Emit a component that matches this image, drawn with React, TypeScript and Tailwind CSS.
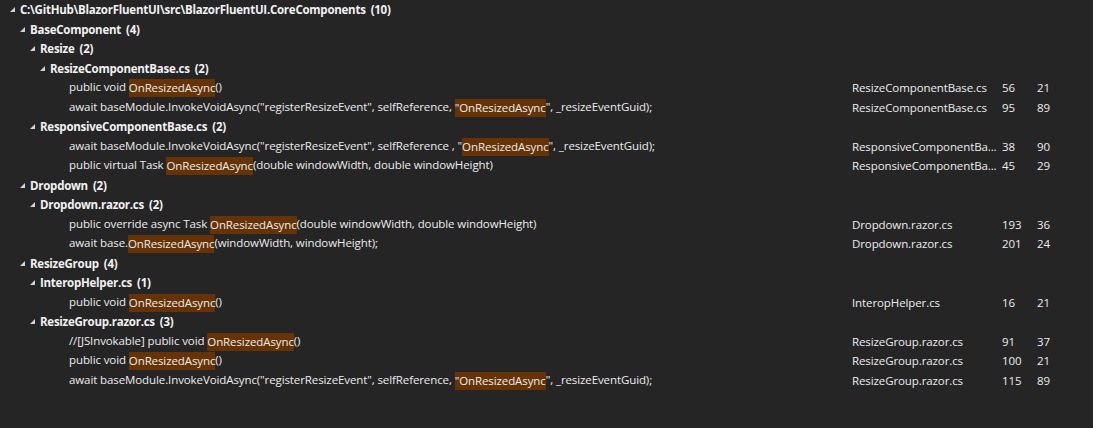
import React from "react";

type Row =
  | { kind: "group"; lvl: number; text: string; count: number }
  | {
      kind: "code";
      pre: string;
      match: string;
      post: string;
      file: string;
      line: number;
      col: number;
    };

const rows: Row[] = [
  { kind: "group", lvl: 0, text: "C:\\GitHub\\BlazorFluentUI\\src\\BlazorFluentUI.CoreComponents", count: 10 },
  { kind: "group", lvl: 1, text: "BaseComponent", count: 4 },
  { kind: "group", lvl: 2, text: "Resize", count: 2 },
  { kind: "group", lvl: 3, text: "ResizeComponentBase.cs", count: 2 },
  { kind: "code", pre: "public void ", match: "OnResizedAsync", post: "()", file: "ResizeComponentBase.cs", line: 56, col: 21 },
  {
    kind: "code",
    pre: 'await baseModule.InvokeVoidAsync("registerResizeEvent", selfReference, ',
    match: '"OnResizedAsync',
    post: '", _resizeEventGuid);',
    file: "ResizeComponentBase.cs",
    line: 95,
    col: 89,
  },
  { kind: "group", lvl: 2, text: "ResponsiveComponentBase.cs", count: 2 },
  {
    kind: "code",
    pre: 'await baseModule.InvokeVoidAsync("registerResizeEvent", selfReference , "',
    match: "OnResizedAsync",
    post: '", _resizeEventGuid);',
    file: "ResponsiveComponentBa...",
    line: 38,
    col: 90,
  },
  {
    kind: "code",
    pre: "public virtual Task ",
    match: "OnResizedAsync",
    post: "(double windowWidth, double windowHeight)",
    file: "ResponsiveComponentBa...",
    line: 45,
    col: 29,
  },
  { kind: "group", lvl: 1, text: "Dropdown", count: 2 },
  { kind: "group", lvl: 2, text: "Dropdown.razor.cs", count: 2 },
  {
    kind: "code",
    pre: "public override async Task ",
    match: "OnResizedAsync",
    post: "(double windowWidth, double windowHeight)",
    file: "Dropdown.razor.cs",
    line: 193,
    col: 36,
  },
  {
    kind: "code",
    pre: "await base.",
    match: "OnResizedAsync",
    post: "(windowWidth, windowHeight);",
    file: "Dropdown.razor.cs",
    line: 201,
    col: 24,
  },
  { kind: "group", lvl: 1, text: "ResizeGroup", count: 4 },
  { kind: "group", lvl: 2, text: "InteropHelper.cs", count: 1 },
  { kind: "code", pre: "public void ", match: "OnResizedAsync", post: "()", file: "InteropHelper.cs", line: 16, col: 21 },
  { kind: "group", lvl: 2, text: "ResizeGroup.razor.cs", count: 3 },
  {
    kind: "code",
    pre: "//[JSInvokable] public void ",
    match: "OnResizedAsync",
    post: "()",
    file: "ResizeGroup.razor.cs",
    line: 91,
    col: 37,
  },
  { kind: "code", pre: "public void ", match: "OnResizedAsync", post: "()", file: "ResizeGroup.razor.cs", line: 100, col: 21 },
  {
    kind: "code",
    pre: 'await baseModule.InvokeVoidAsync("registerResizeEvent", selfReference, ',
    match: '"OnResizedAsync',
    post: '", _resizeEventGuid);',
    file: "ResizeGroup.razor.cs",
    line: 115,
    col: 89,
  },
];

const indent: Record<number, string> = {
  0: "pl-[10px]",
  1: "pl-[20px]",
  2: "pl-[30px]",
  3: "pl-[40px]",
};

function Arrow() {
  return (
    <svg width="5" height="5" viewBox="0 0 5 5" className="shrink-0">
      <polygon points="5,0 5,5 0,5" fill="#d4d4d4" />
    </svg>
  );
}

export default function App() {
  return (
    <div
      className="w-[1093px] h-[428px] bg-[#252526] text-[#f1f1f1] text-[11.5px] tracking-[-0.1px] overflow-hidden"
      style={{ fontFamily: '"Open Sans", "Noto Sans", sans-serif' }}
    >
      {rows.map((r, i) => {
        if (r.kind === "group") {
          return (
            <div key={i} className={`flex h-[19.5px] items-center font-bold tracking-[-0.25px] ${indent[r.lvl]}`}>
              <Arrow />
              <span className="ml-[5px] whitespace-pre">{r.text}</span>
              <span className="ml-[5px] whitespace-pre">({r.count})</span>
            </div>
          );
        }
        return (
          <div key={i} className="flex h-[19.5px] items-center">
            <div className="w-[852px] shrink-0 pl-[69px] whitespace-pre text-[#ececec]">
              <span>{r.pre}</span>
              <span className="inline-block h-[18px] leading-[18px] bg-[#653306] align-middle">{r.match}</span>
              <span>{r.post}</span>
            </div>
            <div className="w-[150px] shrink-0 whitespace-pre overflow-hidden text-[#ececec]">{r.file}</div>
            <div className="w-[35px] shrink-0 text-[#ececec]">{r.line}</div>
            <div className="shrink-0 text-[#ececec]">{r.col}</div>
          </div>
        );
      })}
    </div>
  );
}
